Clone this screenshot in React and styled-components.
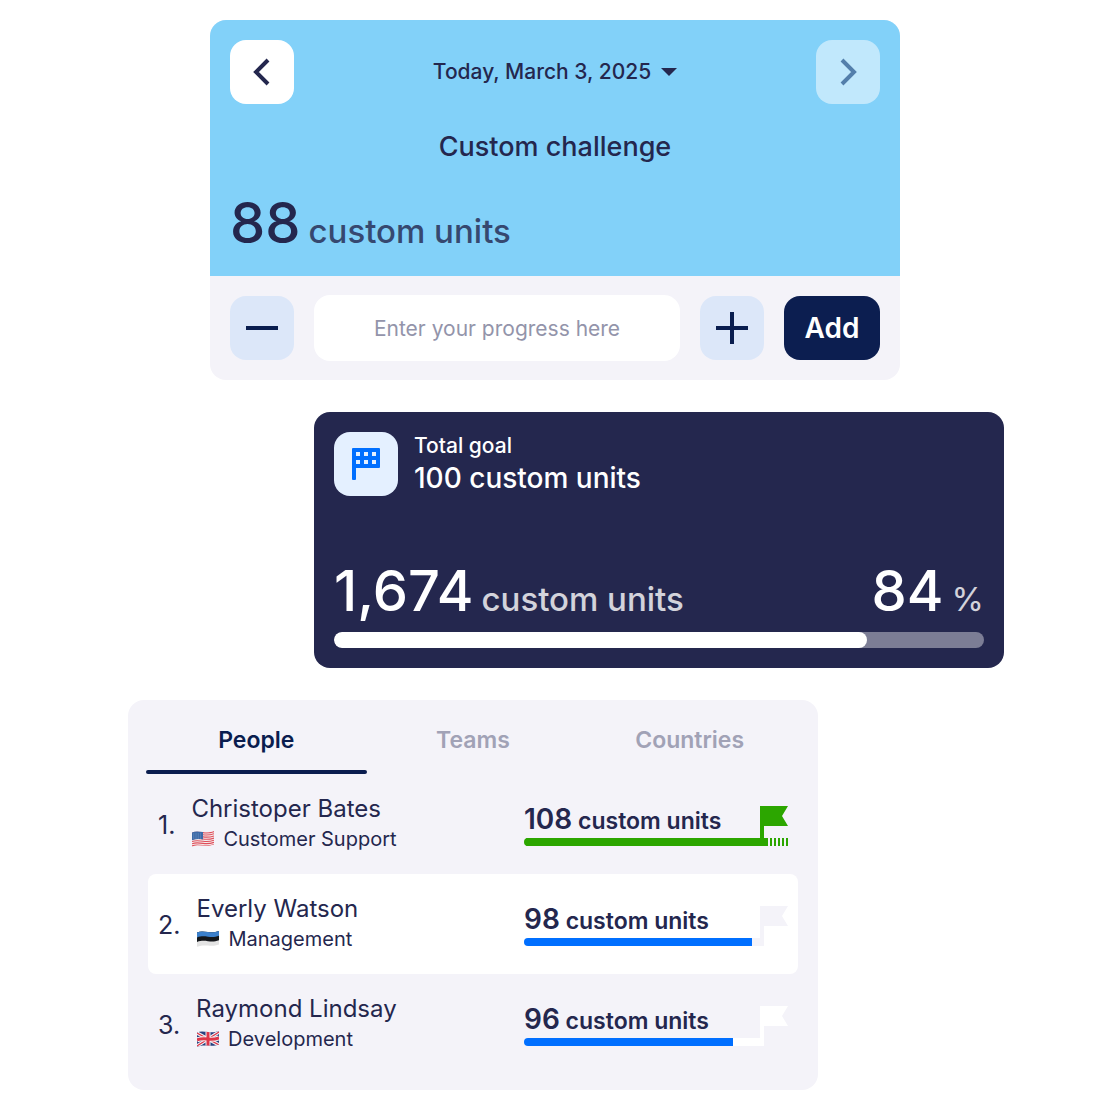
import React, { useState } from "react";
import styled, { createGlobalStyle } from "styled-components";

const people = [
  { name: "Christoper Bates", team: "Customer Support", flag: "us", units: 108, progress: 100 },
  { name: "Everly Watson", team: "Management", flag: "ee", units: 98, progress: 95, current: true },
  { name: "Raymond Lindsay", team: "Development", flag: "gb", units: 96, progress: 87 },
];
const tabs = ["People", "Teams", "Countries"];

const Chevron = ({ right }) => (
  <svg width="64" height="64" viewBox="0 0 64 64" fill="none" aria-hidden="true">
    <path d={right ? "M26 20L38 32L26 44" : "M38 20L26 32L38 44"} stroke="currentColor" strokeWidth="4" />
  </svg>
);

const Sign = ({ plus }) => (
  <svg width="32" height="32" viewBox="0 0 32 32" fill="#0a1d4f" aria-hidden="true">
    <rect x="0" y="14" width="32" height="4" />
    {plus && <rect x="14" y="0" width="4" height="32" />}
  </svg>
);

const GoalFlag = () => (
  <svg width="28" height="32" viewBox="0 0 28 32" aria-hidden="true">
    <path
      fill="#006fff"
      fillRule="evenodd"
      d="M1 0H27Q28 0 28 1V19Q28 20 27 20H4V31Q4 32 3 32H1Q0 32 0 31V1Q0 0 1 0Z
        M4 4V8H8V4Z M12 4V8H16V4Z M20 4V8H24V4Z
        M4 12V16H8V12Z M12 12V16H16V12Z M20 12V16H24V12Z"
    />
  </svg>
);

const Pennant = ({ color }) => (
  <svg width="28" height="32" viewBox="0 0 28 32" aria-hidden="true">
    <path d="M0 0H28L22 10L28 20H4V32H0Z" fill={color} />
  </svg>
);

const wave = "M0 1.4C3 0 7 0.4 11 1S18 1.4 22 0V13.6C18 15 15 15 11 14.6S4 14.4 0 15.8Z";

const CountryFlag = ({ code }) => (
  <svg width="24" height="18" viewBox="-1 -1 24 18" role="img" aria-label={code}>
    <clipPath id={`flag-${code}`}>
      <path d={wave} />
    </clipPath>
    <g clipPath={`url(#flag-${code})`}>
      {code === "us" && (
        <>
          <rect width="22" height="16" fill="#f4eeee" />
          {[0, 1, 2, 3, 4, 5, 6].map((n) => (
            <path
              key={n}
              d="M0 2C3 0.6 7 1 11 1.6S18 2 22 0.6"
              transform={`translate(0 ${n * 2.15})`}
              stroke="#df4e5b"
              strokeWidth="1.1"
              fill="none"
            />
          ))}
          <path d="M0 0H11V8.6C7 7.8 4 8 0 9.2Z" fill="#3d6aa8" />
          {[3, 5, 7].map((y) => (
            <path key={y} d={`M1 ${y}H10`} stroke="#b8cbe4" strokeWidth="0.6" strokeDasharray="0.6 1.2" />
          ))}
        </>
      )}
      {code === "ee" && (
        <>
          <rect width="22" height="16" fill="#e3e3e3" />
          <path d="M0 0H22V9.3C18 10.7 15 10.7 11 10.2S4 9.6 0 11Z" fill="#14171b" />
          <path d="M0 0H22V4.8C18 6.2 15 6.2 11 5.7S4 5 0 6.4Z" fill="#3b80cc" />
        </>
      )}
      {code === "gb" && (
        <>
          <rect width="22" height="16" fill="#27407f" />
          <path d="M0 2L22 14M0 15L22 1" stroke="#f3f0f3" strokeWidth="3.4" />
          <path d="M0 2L22 14M0 15L22 1" stroke="#dd3548" strokeWidth="1.2" />
          <path d="M11 0V16M0 8.8C5 7 7 7.4 11 8S18 8.3 22 6.8" stroke="#f3f0f3" strokeWidth="5" fill="none" />
          <path d="M11 0V16M0 8.8C5 7 7 7.4 11 8S18 8.3 22 6.8" stroke="#dd3548" strokeWidth="3" fill="none" />
        </>
      )}
    </g>
  </svg>
);

const Person = ({ person, place }) => {
  const done = person.progress >= 100;
  const track = person.current ? "#f4f3f9" : "#ffffff";
  return (
    <Row $current={person.current}>
      <Place>{place}.</Place>
      <Who>
        <Name>{person.name}</Name>
        <Team>
          <CountryFlag code={person.flag} />
          {person.team}
        </Team>
      </Who>
      <Score>
        <ScoreTop>
          <Units>
            <UnitsCount>{person.units}</UnitsCount> custom units
          </Units>
          <Pennant color={done ? "#2ca600" : track} />
        </ScoreTop>
        <Track $done={done} $color={track}>
          <TrackFill $done={done} style={{ width: `${person.progress}%` }} />
        </Track>
      </Score>
    </Row>
  );
};

const App = () => {
  const [value, setValue] = useState("");
  const [tab, setTab] = useState("People");
  const goalBar = 82;

  return (
    <>
      <GlobalStyle />
      <Page>
        <Challenge>
          <ChallengeTop>
            <DateRow>
              <NavButton aria-label="Previous day">
                <Chevron />
              </NavButton>
              <DateButton>
                Today, March 3, 2025
                <svg width="16" height="8" viewBox="0 0 16 8" aria-hidden="true">
                  <path d="M0 0H16L8 8Z" fill="#24274e" />
                </svg>
              </DateButton>
              <NavButton aria-label="Next day" disabled>
                <Chevron right />
              </NavButton>
            </DateRow>
            <Title>Custom challenge</Title>
            <Amount>
              <span>88</span>
              <AmountUnit>custom units</AmountUnit>
            </Amount>
          </ChallengeTop>
          <Entry>
            <StepButton aria-label="Less">
              <Sign />
            </StepButton>
            <EntryInput
              type="text"
              aria-label="Your progress"
              placeholder="Enter your progress here"
              value={value}
              onChange={(e) => setValue(e.target.value)}
            />
            <StepButton aria-label="More">
              <Sign plus />
            </StepButton>
            <AddButton>Add</AddButton>
          </Entry>
        </Challenge>

        <Goal>
          <GoalHead>
            <GoalIcon>
              <GoalFlag />
            </GoalIcon>
            <div>
              <GoalLabel>Total goal</GoalLabel>
              <GoalValue>100 custom units</GoalValue>
            </div>
          </GoalHead>
          <GoalNumbers>
            <Amount>
              <span>1,674</span>
              <AmountUnit>custom units</AmountUnit>
            </Amount>
            <Amount>
              <span>84</span>
              <AmountUnit $light>%</AmountUnit>
            </Amount>
          </GoalNumbers>
          <GoalTrack>
            <GoalFill style={{ width: `${goalBar}%` }} />
          </GoalTrack>
        </Goal>

        <Board>
          <Tabs role="tablist">
            {tabs.map((t) => (
              <Tab key={t} role="tab" aria-selected={t === tab} $active={t === tab} onClick={() => setTab(t)}>
                {t}
              </Tab>
            ))}
          </Tabs>
          <List>
            {people.map((person, i) => (
              <Person key={person.name} person={person} place={i + 1} />
            ))}
          </List>
        </Board>
      </Page>
    </>
  );
};

export default App;

const GlobalStyle = createGlobalStyle`
  * {
    box-sizing: border-box;
  }
  body {
    margin: 0;
    background: #ffffff;
    color: #24274e;
    font-family: Inter, sans-serif;
  }
  button, input {
    border: none;
    padding: 0;
    font-family: inherit;
    color: inherit;
  }
  button {
    cursor: pointer;
  }
  svg {
    display: block;
    flex-shrink: 0;
  }
`;

/* the three cards overlap sideways, each one spans three of the five columns */
const Page = styled.main`
  display: grid;
  grid-template-columns: 82fr 104fr 504fr 82fr 104fr;
  row-gap: 32px;
  padding: 20px 108px 22px 128px;
`;

const Challenge = styled.section`
  grid-column: 2 / 5;
  border-radius: 16px;
  overflow: hidden;
  background: #f4f3f9;
`;
const ChallengeTop = styled.div`
  padding: 20px;
  background: #82d1f9;
`;
const DateRow = styled.div`
  display: flex;
  align-items: center;
  justify-content: space-between;
`;
const NavButton = styled.button`
  width: 64px;
  height: 64px;
  border-radius: 16px;
  background: #ffffff;
  color: #24274e;

  &:disabled {
    background: rgba(255, 255, 255, 0.5);
    color: #537fab;
    cursor: default;
  }
`;
const DateButton = styled.button`
  display: flex;
  align-items: center;
  gap: 10px;
  background: none;
  font-size: 21px;
  line-height: 32px;
  font-weight: 500;
`;
const Title = styled.h2`
  margin: 24px 0;
  font-size: 27px;
  line-height: 38px;
  font-weight: 500;
  text-align: center;
`;
const Amount = styled.div`
  display: flex;
  align-items: baseline;
  gap: 8px;
  font-size: 56px;
  line-height: 66px;
  font-weight: 500;
`;
const AmountUnit = styled.span`
  font-size: 33px;
  line-height: 36px;
  font-weight: ${(props) => (props.$light ? 400 : 500)};
  opacity: 0.8;
`;

const Entry = styled.div`
  display: flex;
  align-items: center;
  gap: 20px;
  padding: 19px 20px;
`;
const StepButton = styled.button`
  display: flex;
  align-items: center;
  justify-content: center;
  flex-shrink: 0;
  width: 64px;
  height: 64px;
  border-radius: 16px;
  background: #dce7f9;
`;
const EntryInput = styled.input`
  flex: 1;
  min-width: 0;
  height: 66px;
  border-radius: 16px;
  background: #ffffff;
  font-size: 21px;
  text-align: center;

  &::placeholder {
    color: #9394aa;
    opacity: 1;
  }
`;
const AddButton = styled.button`
  flex-shrink: 0;
  width: 96px;
  height: 64px;
  border-radius: 16px;
  background: #0c1e50;
  color: #ffffff;
  font-size: 28px;
  font-weight: 600;
`;

const Goal = styled.section`
  grid-column: 3 / 6;
  padding: 20px;
  border-radius: 16px;
  background: #24274e;
  color: #ffffff;
`;
const GoalHead = styled.div`
  display: flex;
  align-items: center;
  gap: 16px;
`;
const GoalIcon = styled.div`
  display: flex;
  align-items: center;
  justify-content: center;
  width: 64px;
  height: 64px;
  border-radius: 16px;
  background: #e4f0ff;
`;
const GoalLabel = styled.div`
  font-size: 21px;
  line-height: 28px;
  font-weight: 500;
`;
const GoalValue = styled.div`
  font-size: 28px;
  line-height: 36px;
  font-weight: 500;
`;
const GoalNumbers = styled.div`
  display: flex;
  justify-content: space-between;
  margin: 62px 0 8px;
`;
const GoalTrack = styled.div`
  height: 16px;
  border-radius: 8px;
  overflow: hidden;
  background: #7c7d95;
`;
const GoalFill = styled.div`
  height: 100%;
  border-radius: 8px;
  background: #ffffff;
`;

const Board = styled.section`
  grid-column: 1 / 4;
  padding: 0 20px 16px;
  border-radius: 16px;
  background: #f4f3f9;
`;
const Tabs = styled.div`
  display: grid;
  grid-template-columns: repeat(3, 1fr);
`;
const Tab = styled.button`
  position: relative;
  height: 74px;
  padding-top: 6px;
  background: none;
  color: ${(props) => (props.$active ? "#0a1d4f" : "#a1a2b6")};
  font-size: 23px;
  line-height: 32px;
  font-weight: 600;

  &::after {
    content: "";
    display: ${(props) => (props.$active ? "block" : "none")};
    position: absolute;
    left: -2px;
    right: -2px;
    bottom: 0;
    height: 4px;
    border-radius: 2px;
    background: #0a1d4f;
  }
`;
const List = styled.ol`
  margin: 0;
  padding: 0;
  list-style: none;
`;
const Row = styled.li`
  display: flex;
  align-items: center;
  gap: 16px;
  height: 100px;
  padding: 0 10px;
  border-radius: 8px;
  background: ${(props) => (props.$current ? "#ffffff" : "transparent")};
`;
const Place = styled.span`
  padding-top: 2px;
  font-size: 25px;
  line-height: 32px;
`;
const Who = styled.div`
  flex: 1;
  min-width: 0;
`;
const Name = styled.div`
  font-size: 24px;
  line-height: 30px;
`;
const Team = styled.div`
  display: flex;
  align-items: center;
  gap: 8px;
  font-size: 20px;
  line-height: 30px;
`;
const Score = styled.div`
  width: 264px;
  padding-top: 4px;
`;
const ScoreTop = styled.div`
  display: flex;
  justify-content: space-between;
`;
const Units = styled.div`
  font-size: 23px;
  line-height: 26px;
  font-weight: 600;
  white-space: nowrap;
`;
const UnitsCount = styled.span`
  font-size: 28px;
`;
const Track = styled.div`
  height: 8px;
  width: ${(props) => (props.$done ? "264px" : "240px")};
  padding-right: ${(props) => (props.$done ? "20px" : "0")};
  border-radius: 4px 0 0 4px;
  overflow: hidden;
  background: ${(props) =>
    props.$done ? "repeating-linear-gradient(to left, #2ca600 0 2px, transparent 2px 4px)" : props.$color};
`;
const TrackFill = styled.div`
  height: 100%;
  background: ${(props) => (props.$done ? "#2ca600" : "#006fff")};
`;
